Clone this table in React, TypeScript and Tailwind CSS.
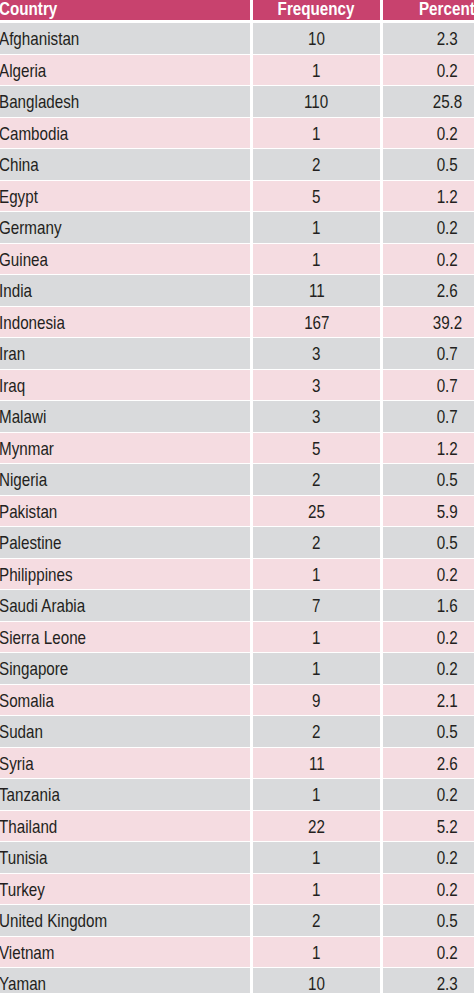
const rows: [string, number, string][] = [
  ['Afghanistan', 10, '2.3'],
  ['Algeria', 1, '0.2'],
  ['Bangladesh', 110, '25.8'],
  ['Cambodia', 1, '0.2'],
  ['China', 2, '0.5'],
  ['Egypt', 5, '1.2'],
  ['Germany', 1, '0.2'],
  ['Guinea', 1, '0.2'],
  ['India', 11, '2.6'],
  ['Indonesia', 167, '39.2'],
  ['Iran', 3, '0.7'],
  ['Iraq', 3, '0.7'],
  ['Malawi', 3, '0.7'],
  ['Mynmar', 5, '1.2'],
  ['Nigeria', 2, '0.5'],
  ['Pakistan', 25, '5.9'],
  ['Palestine', 2, '0.5'],
  ['Philippines', 1, '0.2'],
  ['Saudi Arabia', 7, '1.6'],
  ['Sierra Leone', 1, '0.2'],
  ['Singapore', 1, '0.2'],
  ['Somalia', 9, '2.1'],
  ['Sudan', 2, '0.5'],
  ['Syria', 11, '2.6'],
  ['Tanzania', 1, '0.2'],
  ['Thailand', 22, '5.2'],
  ['Tunisia', 1, '0.2'],
  ['Turkey', 1, '0.2'],
  ['United Kingdom', 2, '0.5'],
  ['Vietnam', 1, '0.2'],
  ['Yaman', 10, '2.3'],
];

// condensed face isn't installed, so narrow Liberation Sans horizontally
const narrowL = 'inline-block scale-x-[0.8] origin-left whitespace-nowrap';
const narrowC = 'inline-block scale-x-[0.8] origin-center whitespace-nowrap';

export default function App() {
  return (
    <div
      className="w-[474px] h-[993px] overflow-hidden bg-white text-[#231f20]"
      style={{ fontFamily: '"Liberation Sans", Arial, sans-serif' }}
    >
      <div className="w-[520px] flex flex-col gap-[3px]">
        <div className="grid grid-cols-[250px_127px_128px] gap-x-[3px] h-[20px] text-white font-bold text-[19px] leading-[16px]">
          <div className="bg-[#c8426e] pt-[1px] -ml-[1px]">
            <span className={narrowL}>Country</span>
          </div>
          <div className="bg-[#c8426e] pt-[1px] text-center">
            <span className={narrowC}>Frequency</span>
          </div>
          <div className="bg-[#c8426e] pt-[1px] text-center">
            <span className={narrowC}>Percent</span>
          </div>
        </div>
        {rows.map(([country, freq, pct], i) => {
          const bg = i % 2 === 0 ? 'bg-[#d9dadc]' : 'bg-[#f5dce1]';
          return (
            <div
              key={country}
              className="grid grid-cols-[250px_127px_128px] gap-x-[3px] h-[28.5px] text-[19px] leading-[28.5px]"
            >
              <div className={`${bg} pt-[2px]`}>
                <span className={`${narrowL} -ml-[1px]`}>{country}</span>
              </div>
              <div className={`${bg} pt-[2px] text-center`}>
                <span className={narrowC}>{freq}</span>
              </div>
              <div className={`${bg} pt-[2px] text-center`}>
                <span className={narrowC}>{pct}</span>
              </div>
            </div>
          );
        })}
      </div>
    </div>
  );
}
